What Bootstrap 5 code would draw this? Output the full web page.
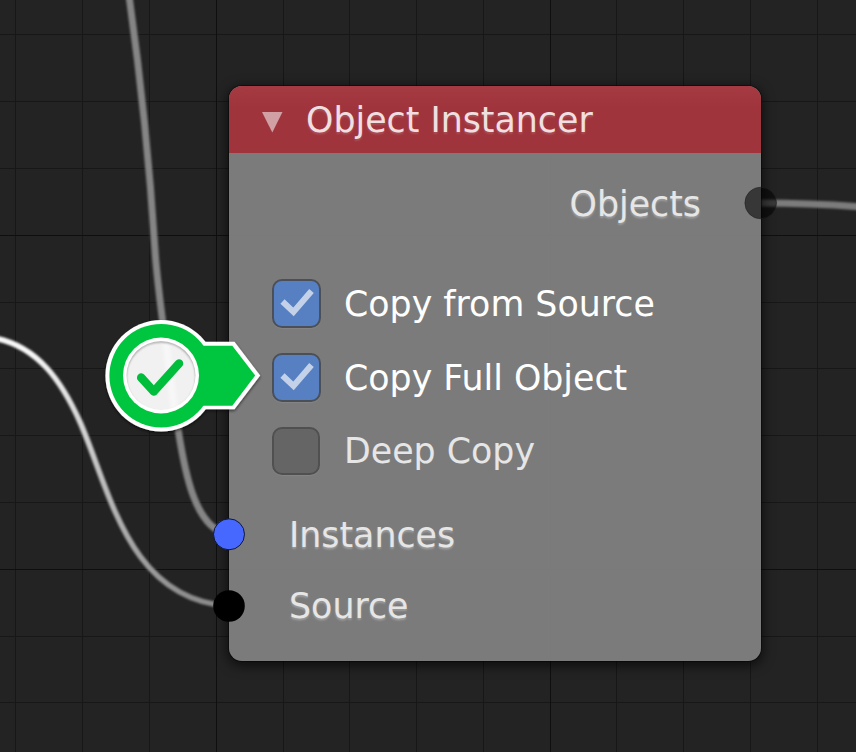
<!DOCTYPE html>
<html lang="en">
<head>
<meta charset="utf-8">
<meta name="viewport" content="width=device-width, initial-scale=1">
<title>Object Instancer</title>
<link href="https://cdn.jsdelivr.net/npm/bootstrap@5.3.0/dist/css/bootstrap.min.css" rel="stylesheet">
<style>
body { background: #232323; font-family: "DejaVu Sans", sans-serif; }
.editor { width: 856px; height: 752px; background: #232323; }
.node-frame { left: 229px; top: 86px; width: 532px; height: 575px; border-radius: 13px; background: rgba(128,128,128,.955);
  box-shadow: 0 0 0 1px rgba(0,0,0,.4), 0 3px 12px 2px rgba(0,0,0,.6); color: #e6e6e6; font-size: 34.8px; line-height: 1; white-space: nowrap; }
.node-title { height: 67px; padding: 2px 0 0 33px; gap: 23px; border-radius: 13px 13px 0 0; background: linear-gradient(#a63a42, #9f343c 22px); color: #f0dfe0; }
.soft-text { text-shadow: 0 2px 2px rgba(255,255,255,.26); }
.node-title .soft-text { text-shadow: 0 2px 2px rgba(255,255,255,.14); }
.node-title svg { margin-top: 4px; }
.node-body { padding-top: 15px; }
.socket-row { height: 72px; padding: 0 60px; }
.socket-row:last-child { height: 70px; }
.options { margin: 27px 0 11px; padding-left: 43px; }
.option { height: 74px; gap: 23px; }
.option:last-child { height: 73px; }
.tick { width: 49px; height: 49px; margin-bottom: 2px; border: 2px solid #4b5058; border-radius: 10px; background: #5680c2; box-shadow: 0 1px 1px rgba(255,255,255,.08); }
.tick-off { width: 48px; height: 48px; margin-right: 1px; border-color: #505050; background: #656565; }
.on { color: #fff; }
</style>
<script src="https://cdn.jsdelivr.net/npm/bootstrap@5.3.0/dist/js/bootstrap.bundle.min.js"></script>
</head>
<body class="overflow-hidden">
<main class="editor position-relative overflow-hidden">
  <svg class="position-absolute top-0 start-0" width="856" height="752" fill="none">
    <defs>
      <linearGradient id="fade" gradientUnits="userSpaceOnUse" x1="30" y1="350" x2="190" y2="600"><stop stop-color="#f8f8f8"/><stop offset=".55" stop-color="#b8b8b8"/><stop offset="1" stop-color="#8c8c8c"/></linearGradient>
      <filter id="soft" filterUnits="userSpaceOnUse" x="-10" y="-10" width="880" height="780"><feGaussianBlur stdDeviation=".9"/></filter>
    </defs>
    <path stroke="#171717" d="M15.5 0V752M82.5 0V752M149.5 0V752M283.5 0V752M349.5 0V752M416.5 0V752M483.5 0V752M616.5 0V752M683.5 0V752M750.5 0V752M817.5 0V752M0 34.5H856M0 101.5H856M0 168.5H856M0 302.5H856M0 368.5H856M0 435.5H856M0 502.5H856M0 636.5H856M0 702.5H856"/>
    <path stroke="#0f0f0f" d="M216.5 0V752M550.5 0V752M0 235.5H856M0 569.5H856"/>
    <g filter="url(#soft)">
      <path stroke="#858585" stroke-width="7" d="M128.5 -8C141 80 150 170 155 250C157.5 290 171 385 178.5 432C184 466 194 530 229 534"/>
      <path stroke="url(#fade)" stroke-width="5.5" d="M-6 338C38 346 62 382 80 422C110 490 128 600 229 606"/>
      <path stroke="#7c7c7c" stroke-width="7" d="M761 203C800 203 830 204.500 864 207"/>
    </g>
  </svg>

  <section class="node-frame position-absolute">
    <header class="node-title d-flex align-items-center">
      <svg width="21" height="21"><path fill="#d0a0a4" d="M0 0H20.500L10.300 20.500Z"/></svg>
      <span class="soft-text">Object Instancer</span>
    </header>
    <div class="node-body d-flex flex-column">
      <div class="socket-row d-flex align-items-center justify-content-end soft-text">Objects</div>
      <div class="options d-flex flex-column">
        <div class="option on d-flex align-items-center">
          <span class="tick d-flex"><svg width="45" height="45" fill="none"><path stroke="#c4d2e9" stroke-width="6" d="M8.500 20.500L19.500 31L37.500 10"/></svg></span><span>Copy from Source</span>
        </div>
        <div class="option on d-flex align-items-center">
          <span class="tick d-flex"><svg width="45" height="45" fill="none"><path stroke="#c4d2e9" stroke-width="6" d="M8.500 20.500L19.500 31L37.500 10"/></svg></span><span>Copy Full Object</span>
        </div>
        <div class="option d-flex align-items-center"><span class="tick tick-off"></span><span>Deep Copy</span></div>
      </div>
      <div class="socket-row d-flex align-items-center soft-text">Instances</div>
      <div class="socket-row d-flex align-items-center soft-text">Source</div>
    </div>
  </section>

  <svg class="position-absolute top-0 start-0" width="856" height="752" fill="none">
    <defs>
      <filter id="drop" filterUnits="userSpaceOnUse" x="90" y="300" width="190" height="150"><feDropShadow dx="0" dy="1.500" stdDeviation="1.500" flood-opacity=".6"/></filter>
      <filter id="blur"><feGaussianBlur stdDeviation="1"/></filter>
      <filter id="glow" filterUnits="userSpaceOnUse" x="140" y="320" width="60" height="110"><feGaussianBlur stdDeviation="1.500"/></filter>
      <clipPath id="disc"><circle cx="161" cy="375.500" r="34.500"/></clipPath>
    </defs>
    <circle cx="760.700" cy="203" r="15.800" fill="#000" fill-opacity=".55" stroke="#222" stroke-opacity=".6"/>
    <circle cx="229" cy="534.300" r="15.500" fill="#4768ff" stroke="#101838"/>
    <circle cx="229" cy="606" r="15.800" fill="#000"/>
    <g filter="url(#drop)">
      <path fill="#fff" d="M203 341.800H234.500L260.200 375.500L234.500 409.300H203Z"/>
      <circle cx="161.200" cy="375.700" r="55.800" fill="#fff"/>
    </g>
    <path fill="#00c53e" d="M190 345.700H232.300L255.200 375.500L232.300 405.700H190Z"/>
    <circle cx="161.200" cy="375.700" r="51.800" fill="#00c53e"/>
    <circle cx="161" cy="375.500" r="38" fill="#fff"/>
    <g clip-path="url(#disc)">
      <circle cx="161" cy="375.500" r="34.500" fill="#f1f1f1"/>
      <path stroke="#f7f7f7" stroke-width="7" filter="url(#glow)" d="M165 336L175 414"/>
      <circle cx="161" cy="377" r="35.500" stroke="#888" stroke-width="1.500" filter="url(#blur)"/>
    </g>
    <path stroke="#00bd3c" stroke-width="8.500" stroke-linecap="round" stroke-linejoin="round" d="M141.200 377.600L153.800 391.500L179 363.500"/>
  </svg>
</main>
</body>
</html>
